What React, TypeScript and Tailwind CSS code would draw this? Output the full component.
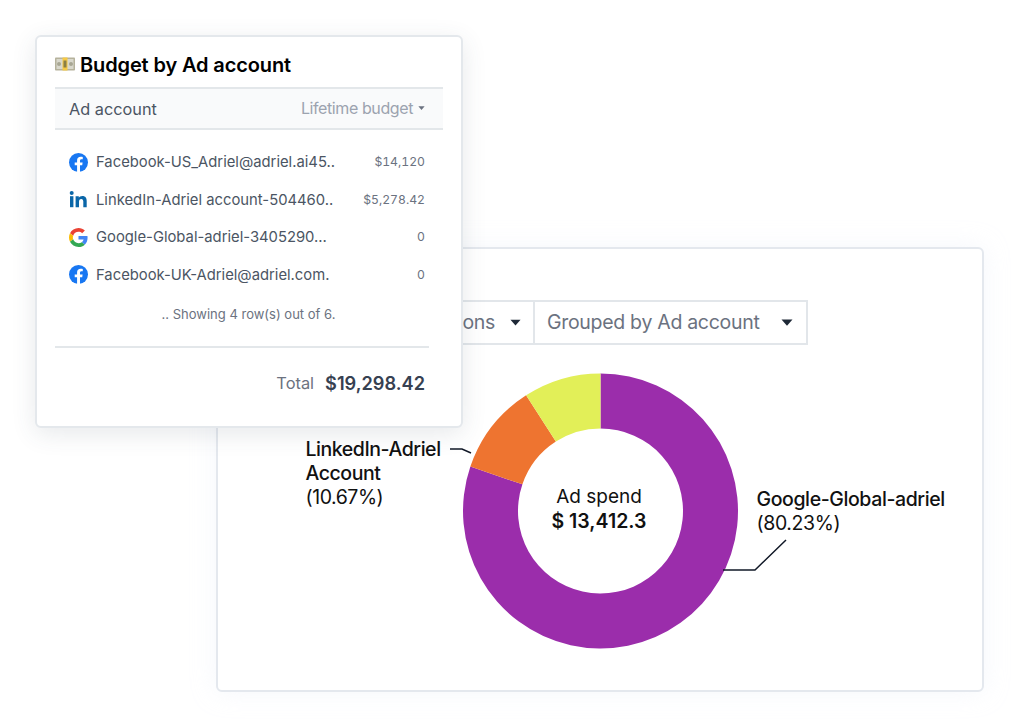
import React from "react";

const font = { fontFamily: '"Inter", "Liberation Sans", sans-serif' };

function Facebook() {
  return (
    <svg width="19" height="19" viewBox="0 0 24 24" className="shrink-0">
      <circle cx="12" cy="12" r="12" fill="#1877f2" />
      <path d="M16.7 15.5l.5-3.5h-3.3V9.8c0-1 .5-1.9 2-1.9h1.5v-3s-1.4-.2-2.7-.2c-2.7 0-4.5 1.6-4.5 4.6V12h-3v3.5h3V24h3.7v-8.5z" fill="#fff" />
    </svg>
  );
}

function Linkedin() {
  return (
    <svg width="19" height="19" viewBox="0 0 19 19" className="shrink-0">
      <rect x="1" y="6.2" width="3.4" height="11" fill="#0a66a8" />
      <circle cx="2.7" cy="2.9" r="2" fill="#0a66a8" />
      <path d="M6.6 6.2h3.2v1.5c.6-1 1.8-1.8 3.5-1.8 3.4 0 4.4 2.1 4.4 5.2v6.1h-3.4v-5.4c0-1.5-.4-2.9-2-2.9-1.7 0-2.3 1.3-2.3 2.9v5.4H6.6z" fill="#0a66a8" />
    </svg>
  );
}

function Google() {
  return (
    <svg width="19" height="19" viewBox="0 0 48 48" className="shrink-0">
      <path fill="#EA4335" d="M24 9.5c3.5 0 6.7 1.2 9.2 3.6l6.9-6.9C35.9 2.4 30.5 0 24 0 14.6 0 6.5 5.4 2.6 13.2l8 6.2C12.4 13.7 17.7 9.5 24 9.5z" />
      <path fill="#4285F4" d="M46.9 24.5c0-1.6-.1-3.1-.4-4.5H24v9h12.9c-.6 3-2.2 5.500-4.700 7.200l7.700 6c4.500-4.200 7-10.300 7-17.700z" />
      <path fill="#FBBC05" d="M10.500 28.600c-.5-1.400-.8-3-.8-4.600s.3-3.200.8-4.600l-8-6.200C.9 16.500 0 20.100 0 24s.9 7.500 2.600 10.800z" />
      <path fill="#34A853" d="M24 48c6.500 0 11.900-2.100 15.900-5.800l-7.700-6c-2.200 1.400-4.900 2.300-8.200 2.300-6.300 0-11.600-4.200-13.500-9.900l-8 6.200C6.500 42.600 14.600 48 24 48z" />
    </svg>
  );
}

function Money() {
  return (
    <svg width="20" height="14" viewBox="0 0 20 14" className="shrink-0 -translate-y-[1px]">
      <rect x="0" y="0.500" width="20" height="13" rx="0.800" fill="#b5b29c" />
      <rect x="1.500" y="2" width="17" height="10" fill="#d9d8cc" />
      <circle cx="4" cy="7" r="2" fill="#a8a794" />
      <circle cx="16" cy="7" r="2" fill="#a8a794" />
      <rect x="7.500" y="0.500" width="5" height="13" fill="#f6c945" />
      <rect x="8.500" y="3.500" width="3" height="7" fill="#8a7f45" />
    </svg>
  );
}

const rows = [
  { icon: <Facebook />, name: "Facebook-US_Adriel@adriel.ai45..", value: "$14,120" },
  { icon: <Linkedin />, name: "LinkedIn-Adriel account-504460..", value: "$5,278.42" },
  { icon: <Google />, name: "Google-Global-adriel-3405290...", value: "0" },
  { icon: <Facebook />, name: "Facebook-UK-Adriel@adriel.com.", value: "0" },
];

function polar(r: number, deg: number, cx: number, cy: number) {
  const a = ((deg - 90) * Math.PI) / 180;
  return [cx + r * Math.cos(a), cy + r * Math.sin(a)];
}

function segment(start: number, end: number) {
  const cx = 150.500;
  const cy = 140;
  const R = 137.500;
  const r = 82.500;
  const [x1, y1] = polar(R, start, cx, cy);
  const [x2, y2] = polar(R, end, cx, cy);
  const [x3, y3] = polar(r, end, cx, cy);
  const [x4, y4] = polar(r, start, cx, cy);
  const large = end - start > 180 ? 1 : 0;
  return `M${x1} ${y1}A${R} ${R} 0 ${large} 1 ${x2} ${y2}L${x3} ${y3}A${r} ${r} 0 ${large} 0 ${x4} ${y4}Z`;
}

function Caret({ className }: { className: string }) {
  return (
    <svg viewBox="0 0 12 7" className={className}>
      <path d="M0.500 0.500h11L6 6.800z" fill="currentColor" />
    </svg>
  );
}

export default function App() {
  return (
    <div className="relative h-[720px] w-[1012px] overflow-hidden bg-white" style={font}>
      <div className="absolute left-[216px] top-[247px] h-[445px] w-[768px] rounded-md border-2 border-[#e4e8ee] bg-white pt-[51px] shadow-[0_0_24px_rgba(225,232,245,0.35)]">
        <div className="ml-[81px] flex h-[45px] w-[509px] border-2 border-[#e2e6ea] text-[19.500px] tracking-[-0.300px] text-[#6b7280]">
          <div className="flex w-[234px] items-center justify-end gap-[15px] border-r-2 border-[#e2e6ea] pr-[12px]">
            <span>Conversions</span>
            <Caret className="h-[7px] w-[11px] text-[#1f2937]" />
          </div>
          <div className="flex flex-1 items-center justify-between pl-[12px] pr-[13px]">
            <span>Grouped by Ad account</span>
            <Caret className="h-[7px] w-[12px] text-[#1f2937]" />
          </div>
        </div>
        <div className="relative mt-[26px] h-[280px]">
          <svg width="340" height="280" viewBox="0 0 340 280" className="ml-[232px] block">
            <path d={segment(0, 288.830)} fill="#9b2dab" />
            <path d={segment(288.830, 327.240)} fill="#ee7430" />
            <path d={segment(327.240, 360)} fill="#e2ef58" />
            <path d="M273 199H305L336 169" fill="none" stroke="#111827" strokeWidth="1.500" />
            <path d="M0 78H12L21 82" fill="none" stroke="#111827" strokeWidth="1.500" />
          </svg>
          <div className="absolute left-[87.500px] top-[66px] text-[19.500px] leading-[24px] tracking-[-0.450px] text-[#111]">
            <div className="font-[450]">LinkedIn-Adriel</div>
            <div className="font-[450]">Account</div>
            <div>(10.67%)</div>
          </div>
          <div className="absolute left-[538.500px] top-[116px] text-[19.500px] leading-[24px] tracking-[-0.400px] text-[#111]">
            <div className="font-[450]">Google-Global-adriel</div>
            <div>(80.23%)</div>
          </div>
          <div className="absolute left-[331px] top-[114px] w-[100px] text-center leading-[24px] text-[#111]">
            <div className="text-[19px]">Ad spend</div>
            <div className="whitespace-nowrap text-[19.500px] font-semibold">$ 13,412.3</div>
          </div>
        </div>
      </div>

      <div className="absolute left-[35px] top-[35px] h-[393px] w-[428px] rounded-md border-2 border-[#e4e8ec] bg-white shadow-[0_6px_24px_rgba(60,70,90,0.12)]">
        <div className="ml-[18px] mt-[17px] flex h-[22px] items-center gap-[5px]">
          <Money />
          <span className="text-[20px] font-semibold tracking-[-0.130px] text-black">Budget by Ad account</span>
        </div>
        <div className="ml-[18px] mt-[11px] flex h-[43px] w-[388px] items-center justify-between border-y-2 border-[#e3e7ea] bg-[#f9fafb] pl-[14px] pr-[18px]">
          <span className="mt-[1px] text-[16.300px] text-[#4b5563]">Ad account</span>
          <span className="mb-[1px] flex items-center gap-[5px] text-[16px] tracking-[-0.400px] text-[#9ca3af]">
            Lifetime budget
            <Caret className="h-[4px] w-[7px] text-[#6b7280]" />
          </span>
        </div>
        <div className="ml-[32px] mt-[13.500px] w-[356px]">
          {rows.map((r) => (
            <div key={r.name} className="flex h-[37.500px] items-center">
              {r.icon}
              <span className="ml-[8px] flex-1 whitespace-nowrap text-[14.800px] text-[#4b5563]">{r.name}</span>
              <span className="text-[12.200px] tabular-nums text-[#6b7280]">{r.value}</span>
            </div>
          ))}
        </div>
        <div className="ml-[18px] mt-[11.500px] w-[374px] pb-[23px] pl-[13px] text-center text-[13px] leading-[18px] text-[#6b7280]">
          .. Showing 4 row(s) out of 6.
        </div>
        <div className="ml-[18px] flex h-[73px] w-[374px] items-center justify-end gap-[11px] border-t-2 border-[#e3e7ea] pr-[4px]">
          <span className="text-[16.400px] text-[#6b7280]">Total</span>
          <span className="text-[18.200px] font-semibold text-[#374151]">$19,298.42</span>
        </div>
      </div>
    </div>
  );
}
